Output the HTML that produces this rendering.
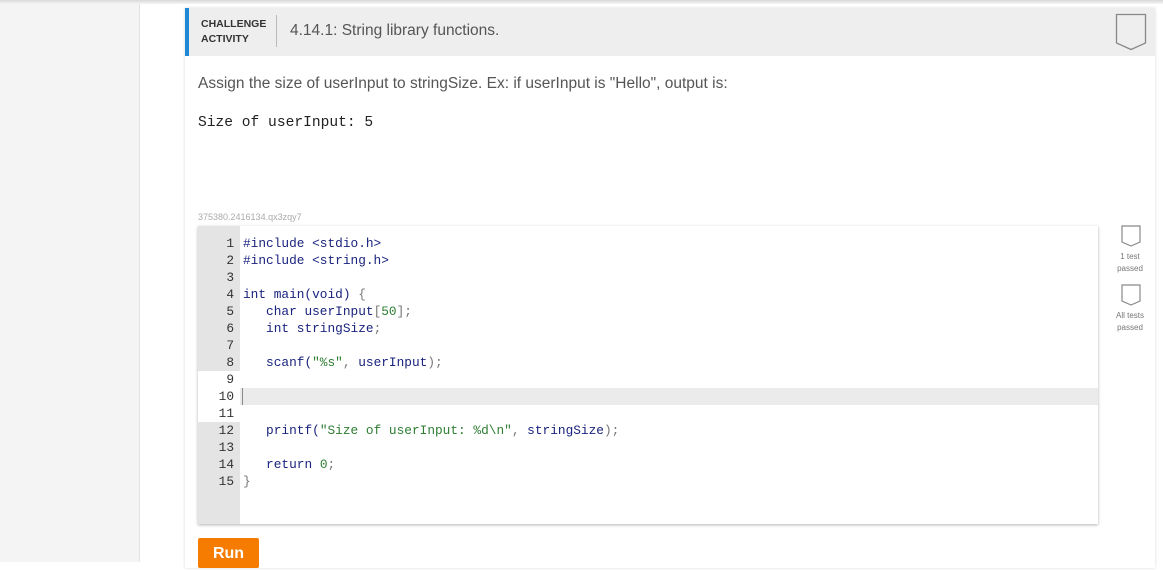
<!DOCTYPE html>
<html><head><style>
*{margin:0;padding:0;box-sizing:border-box}
body{width:1163px;height:562px;overflow:hidden;background:#fff;font-family:"Liberation Sans",Arial,sans-serif;position:relative}
.leftbg{position:absolute;left:0;top:0;width:140px;height:562px;background:#f4f4f4;border-right:1px solid #e2e2e2}
.topsh{position:absolute;left:0;top:0;width:1163px;height:4px;background:linear-gradient(#d8d8d8,#f6f6f6)}
.card{position:absolute;left:185px;top:8px;width:970px;height:560px;background:#fff;box-shadow:0 0 3px rgba(0,0,0,.15)}
.hdr{position:absolute;left:185px;top:8px;width:970px;height:48px;background:#eeeeee;border-left:4px solid #1e88d4}
.ch{position:absolute;left:201px;top:17px;font-size:10.5px;font-weight:bold;color:#333;line-height:15px}
.sep{position:absolute;left:276px;top:15px;width:1px;height:32px;background:#bbb}
.ttl{position:absolute;left:290px;top:22px;font-size:15.5px;color:#555}
.mono{font-family:"Liberation Mono","DejaVu Sans Mono",monospace}
.desc{position:absolute;left:198px;top:75px;font-size:15.5px;color:#555}
.out{position:absolute;left:198px;top:115px;font-size:14.6px;color:#222}
.id{position:absolute;left:198px;top:212px;font-size:9px;color:#aaa}
.ed{position:absolute;left:198px;top:226px;width:900px;height:298px;background:#fff;box-shadow:0 1px 3px rgba(0,0,0,.3)}
.gut{position:absolute;left:0;top:0;width:42px;height:298px;background:#e4e4e4}
.ln{position:absolute;font-size:12.8px;line-height:17px;white-space:pre;color:#333}
.num{left:0;width:36px;text-align:right}
.code{left:45px}
.kw{color:#1a237e}.n{color:#2e7d32}.g{color:#777}
.act{position:absolute;left:42px;top:162px;width:858px;height:17px;background:#ebebeb}
.run{position:absolute;left:198px;top:538px;width:61px;height:30px;background:#f57c00;color:#fff;font-weight:bold;font-size:16px;text-align:center;line-height:32px;border-radius:2px}
.lab{position:absolute;font-size:8px;color:#777;text-align:center;width:40px;line-height:12px}
</style></head><body>
<div class="leftbg"></div><div class="topsh"></div>
<div class="card"></div>
<div class="hdr"></div>
<div class="ch">CHALLENGE<br>ACTIVITY</div>
<div class="sep"></div>
<div class="ttl">4.14.1: String library functions.</div>
<svg style="position:absolute;left:1115px;top:13px" width="32" height="38"><path d="M1.5 1.5H30.5V30L16 36.5L1.5 30Z" fill="none" stroke="#888" stroke-width="1.3"/></svg>
<div class="desc">Assign the size of userInput to stringSize. Ex: if userInput is "Hello", output is:</div>
<div class="out mono">Size of userInput: 5</div>
<div class="id">375380.2416134.qx3zqy7</div>
<div class="ed">
<div class="gut"></div>
<div style="position:absolute;left:0;top:145px;width:42px;height:51px;background:#fff"></div>
<div class="act"></div>
<div style="position:absolute;left:44px;top:162px;width:1px;height:17px;background:#888"></div>
<div class="ln num mono" style="top:9px">1
2
3
4
5
6
7
8
9
10
11
12
13
14
15</div>
<div class="ln code mono" style="top:9px"><span class="kw">#include &lt;stdio.h&gt;</span>
<span class="kw">#include &lt;string.h&gt;</span>

<span class="kw">int main(void) </span><span class="g">{</span>
   <span class="kw">char userInput</span><span class="g">[</span><span class="n">50</span><span class="g">];</span>
   <span class="kw">int stringSize</span><span class="g">;</span>

   <span class="kw">scanf(</span><span class="n">"%s"</span><span class="g">,</span><span class="kw"> userInput</span><span class="g">);</span>



   <span class="kw">printf(</span><span class="n">"Size of userInput: %d\n"</span><span class="g">,</span><span class="kw"> stringSize</span><span class="g">);</span>

   <span class="kw">return </span><span class="n">0</span><span class="g">;</span>
<span class="g">}</span></div>
</div>
<svg style="position:absolute;left:1121px;top:225px" width="20" height="24"><path d="M1 1H19V17L10 21L1 17Z" fill="none" stroke="#888" stroke-width="1.2"/></svg>
<div class="lab" style="left:1110px;top:251px">1 test<br>passed</div>
<svg style="position:absolute;left:1121px;top:284px" width="20" height="24"><path d="M1 1H19V17L10 21L1 17Z" fill="none" stroke="#888" stroke-width="1.2"/></svg>
<div class="lab" style="left:1110px;top:310px">All tests<br>passed</div>
<div class="run">Run</div>
</body></html>
